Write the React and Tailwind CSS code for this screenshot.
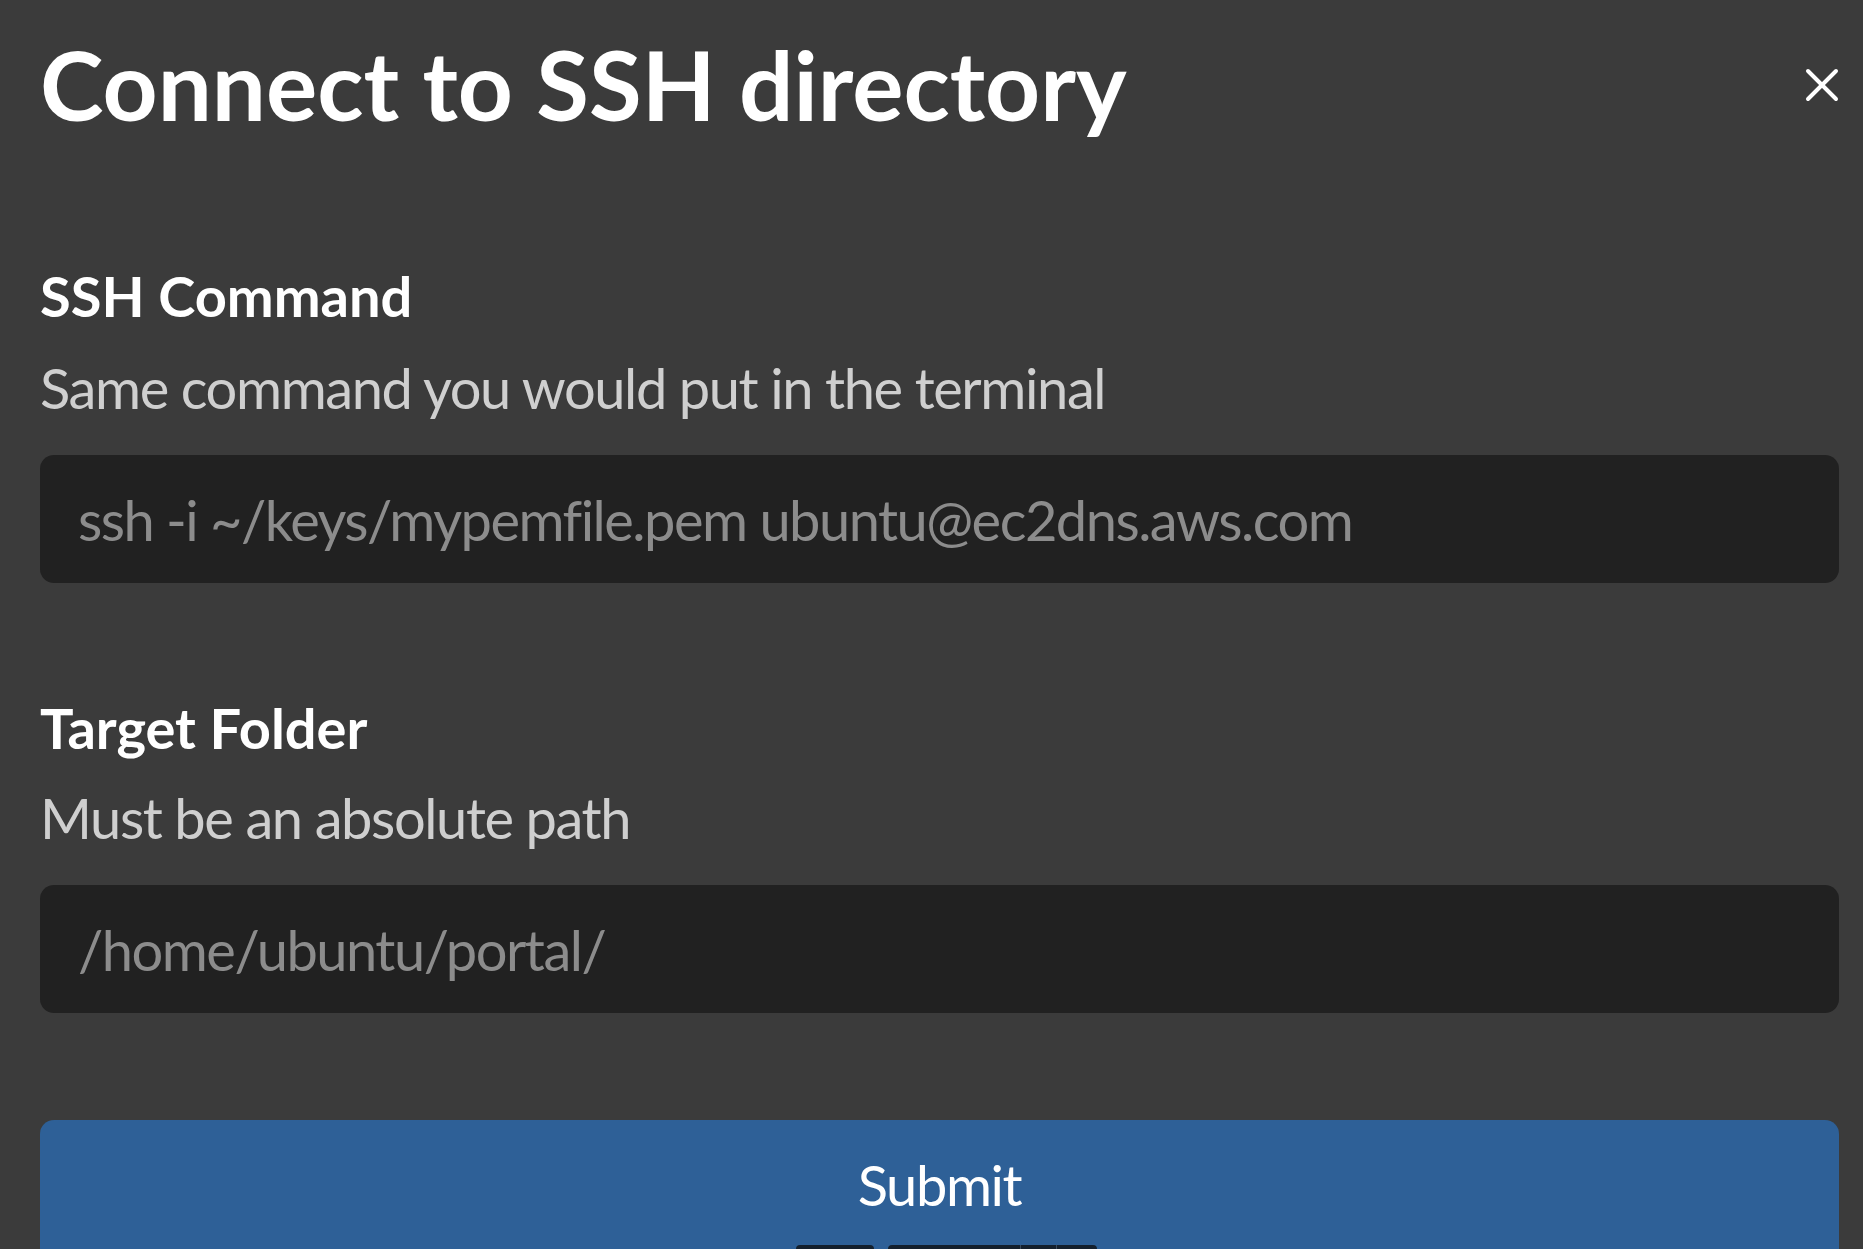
export default function App() {
  return (
    <div className="relative min-h-screen h-[1249px] overflow-hidden bg-[#3b3b3b] pl-[40px] pr-[24px] font-['Lato','Open_Sans',sans-serif]">
      <div className="flex justify-between items-start pt-[36px]">
        <h1 className="text-[96px] leading-none font-bold text-white">Connect to SSH directory</h1>
        <button className="mt-[32px] w-[34px] h-[34px] flex items-center justify-center text-white">
          <svg width="34" height="34" viewBox="0 0 34 34" fill="none" stroke="currentColor" strokeWidth="4" strokeLinecap="round">
            <line x1="3" y1="3" x2="31" y2="31" />
            <line x1="31" y1="3" x2="3" y2="31" />
          </svg>
        </button>
      </div>

      <div className="mt-[136px] text-[56px] leading-none font-bold text-white">SSH Command</div>
      <div className="mt-[36px] text-[56px] leading-none tracking-[-0.025em] text-[#cfcfcf]">Same command you would put in the terminal</div>
      <input
        className="mt-[39px] block w-full h-[128px] rounded-[14px] bg-[#212121] px-[38px] text-[56px] tracking-[-0.027em] text-white placeholder:text-[#8c8c8c] outline-none"
        placeholder="ssh -i ~/keys/mypemfile.pem ubuntu@ec2dns.aws.com"
      />

      <div className="mt-[117px] text-[56px] leading-none font-bold text-white">Target Folder</div>
      <div className="mt-[34px] text-[56px] leading-none tracking-[-0.025em] text-[#cfcfcf]">Must be an absolute path</div>
      <input
        className="mt-[39px] block w-full h-[128px] rounded-[14px] bg-[#212121] px-[38px] text-[56px] tracking-[-0.027em] text-white placeholder:text-[#8c8c8c] outline-none"
        placeholder="/home/ubuntu/portal/"
      />

      <button className="mt-[107px] w-full h-[180px] rounded-[14px] bg-[#2e6097] text-white text-[56px] tracking-[-0.025em] flex justify-center pt-[37px]">
        <span className="leading-none">Submit</span>
      </button>

      <div className="absolute bottom-0 left-[796px] flex gap-[14px]">
        <div className="w-[78px] h-[4px] rounded-t-[6px] bg-[#14202d]" />
        <div className="flex h-[4px] rounded-t-[6px] overflow-hidden">
          <div className="w-[132px] bg-[#14202d]" />
          <div className="w-[1px] bg-[#3a4a5c]" />
          <div className="w-[35px] bg-[#14202d]" />
          <div className="w-[1px] bg-[#3a4a5c]" />
          <div className="w-[40px] bg-[#14202d]" />
        </div>
      </div>
    </div>
  );
}
